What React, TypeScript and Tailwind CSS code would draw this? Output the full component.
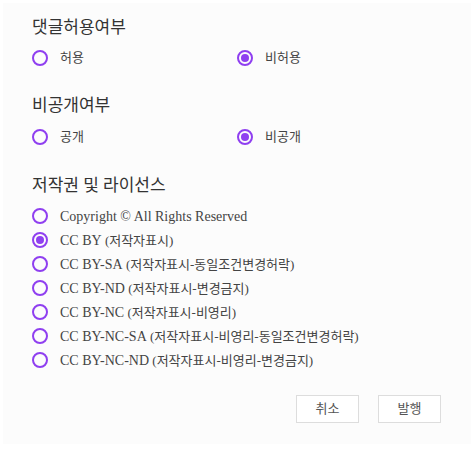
import { useState } from 'react';

const font = { fontFamily: '"Liberation Serif", "Noto Sans CJK KR", serif' };

function Radio({ checked, label, onClick }: { checked: boolean; label: string; onClick: () => void }) {
  // latin part of the license label is set a bit larger than the hangul part
  const idx = label.indexOf(' (');
  const latin = idx >= 0 ? label.slice(0, idx) : label;
  const rest = idx >= 0 ? label.slice(idx) : '';
  const isLatin = /^[A-Za-z]/.test(label);
  return (
    <label className="flex items-center h-6 cursor-pointer" onClick={onClick}>
      <span className="w-4 h-4 rounded-full border-2 border-[#8f3ff0] flex items-center justify-center shrink-0">
        {checked && <span className="w-2 h-2 rounded-full bg-[#8f3ff0]" />}
      </span>
      <span className="ml-3 text-[13px] text-[#444] whitespace-nowrap">
        <span className={isLatin ? 'text-[14px]' : ''}>{latin}</span>
        {rest}
      </span>
    </label>
  );
}

const licenses = [
  'Copyright © All Rights Reserved',
  'CC BY (저작자표시)',
  'CC BY-SA (저작자표시-동일조건변경허락)',
  'CC BY-ND (저작자표시-변경금지)',
  'CC BY-NC (저작자표시-비영리)',
  'CC BY-NC-SA (저작자표시-비영리-동일조건변경허락)',
  'CC BY-NC-ND (저작자표시-비영리-변경금지)',
];

export default function App() {
  const [comment, setComment] = useState(false);
  const [open, setOpen] = useState(false);
  const [license, setLicense] = useState(1);

  return (
    <div className="w-[474px] h-[452px] bg-white p-[3px] pb-[8px]" style={font}>
      <div className="h-full bg-[#fcfcfc] pt-[13px] pl-[29px] pr-[30px]">
        <h3 className="text-[17px] leading-6 text-[#333]">댓글허용여부</h3>
        <div className="grid grid-cols-[205px_1fr] mt-[6px]">
          <Radio checked={comment} label="허용" onClick={() => setComment(true)} />
          <Radio checked={!comment} label="비허용" onClick={() => setComment(false)} />
        </div>

        <h3 className="text-[17px] leading-6 text-[#333] mt-[24px]">비공개여부</h3>
        <div className="grid grid-cols-[205px_1fr] mt-[7px]">
          <Radio checked={open} label="공개" onClick={() => setOpen(true)} />
          <Radio checked={!open} label="비공개" onClick={() => setOpen(false)} />
        </div>

        <h3 className="text-[17px] leading-6 text-[#333] mt-[25px]">저작권 및 라이선스</h3>
        <div className="flex flex-col mt-[6px]">
          {licenses.map((l, i) => (
            <Radio key={l} checked={license === i} label={l} onClick={() => setLicense(i)} />
          ))}
        </div>

        <div className="flex justify-end gap-[19px] mt-[23px]">
          <button className="w-[63px] h-[28px] border border-[#ddd] bg-white text-[13px] text-[#555]">취소</button>
          <button className="w-[63px] h-[28px] border border-[#ddd] bg-white text-[13px] text-[#555]">발행</button>
        </div>
      </div>
    </div>
  );
}
